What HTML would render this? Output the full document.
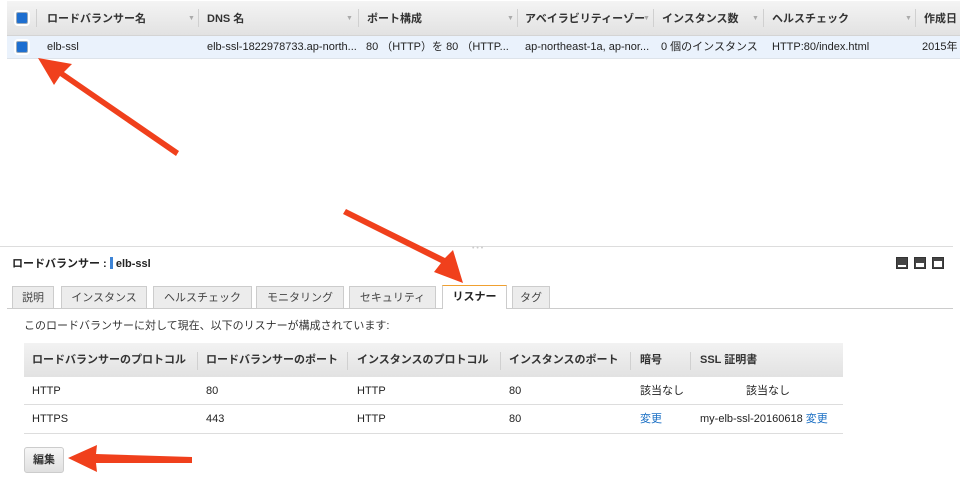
<!DOCTYPE html>
<html><head><meta charset="utf-8"><style>
body{margin:0;width:960px;height:493px;background:#fff;font-family:"Liberation Sans","Noto Sans CJK JP",sans-serif;font-size:11px;color:#222;position:relative;overflow:hidden}
.a{position:absolute;white-space:nowrap;line-height:14px}
.hdr{position:absolute;left:7px;top:1px;width:953px;height:34px;background:linear-gradient(#f4f4f4,#e2e2e2);border-bottom:1px solid #d4d4d4}
.row{position:absolute;left:7px;top:36px;width:953px;height:22px;background:#eaf2fc;border-bottom:1px solid #dde3ea}
.cb{position:absolute;width:10px;height:10px;background:#1e6fd0;border:1px solid #9ab;border-radius:2px;box-shadow:0 0 0 2px #fff}
.th{font-weight:bold;color:#333}
.sep{position:absolute;top:9px;width:1px;height:18px;background:#d0d0d0}
.dd{position:absolute;top:15px;font-size:7px;color:#aaa}
.tab{position:absolute;top:286px;height:22px;box-sizing:border-box;background:#ececec;border:1px solid #ccc;border-bottom:none;font-size:11px;color:#444;text-align:center;line-height:22px}
.lt{position:absolute;left:24px;top:343px;width:819px;height:34px;background:linear-gradient(#f2f2f2,#e2e2e2)}
.ln{position:absolute;left:24px;width:819px;height:1px;background:#ddd}
.ic{position:absolute;top:257px;width:10px;height:10px;border:1px solid #333;background:#444}
</style></head><body>
<div class="hdr"></div>
<div class="cb" style="left:16px;top:12px"></div>
<div class="sep" style="left:36px"></div>
<div class="a th" style="left:47px;top:12px">ロードバランサー名</div><div class="dd" style="left:188px">▼</div>
<div class="sep" style="left:198px"></div>
<div class="a th" style="left:207px;top:12px">DNS 名</div><div class="dd" style="left:346px">▼</div>
<div class="sep" style="left:358px"></div>
<div class="a th" style="left:367px;top:12px">ポート構成</div><div class="dd" style="left:507px">▼</div>
<div class="sep" style="left:517px"></div>
<div class="a th" style="left:525px;top:12px">アベイラビリティーゾー</div><div class="dd" style="left:643px">▼</div>
<div class="sep" style="left:653px"></div>
<div class="a th" style="left:662px;top:12px">インスタンス数</div><div class="dd" style="left:752px">▼</div>
<div class="sep" style="left:763px"></div>
<div class="a th" style="left:772px;top:12px">ヘルスチェック</div><div class="dd" style="left:905px">▼</div>
<div class="sep" style="left:915px"></div>
<div class="a th" style="left:924px;top:12px">作成日</div>
<div class="row"></div>
<div class="cb" style="left:16px;top:41px"></div>
<div class="a" style="left:47px;top:40px">elb-ssl</div>
<div class="a" style="left:207px;top:40px">elb-ssl-1822978733.ap-north...</div>
<div class="a" style="left:366px;top:40px">80 （HTTP）を 80 （HTTP...</div>
<div class="a" style="left:525px;top:40px">ap-northeast-1a, ap-nor...</div>
<div class="a" style="left:661px;top:40px">0 個のインスタンス</div>
<div class="a" style="left:772px;top:40px">HTTP:80/index.html</div>
<div class="a" style="left:922px;top:40px">2015年</div>
<div style="position:absolute;left:0;top:246px;width:953px;height:1px;background:#ddd"></div>
<div class="a" style="left:472px;top:242px;font-size:7px;color:#ccc">• • •</div>
<div class="a th" style="left:12px;top:257px;color:#222">ロードバランサー : <span style="display:inline-block;width:3px;height:12px;background:#3d84d6;vertical-align:-2px"></span> elb-ssl</div>
<div class="ic" style="left:896px"><div style="position:absolute;left:1px;bottom:1px;width:8px;height:2px;background:#fff"></div></div>
<div class="ic" style="left:914px"><div style="position:absolute;left:1px;bottom:1px;width:8px;height:4px;background:#fff"></div></div>
<div class="ic" style="left:932px"><div style="position:absolute;left:1px;bottom:1px;width:8px;height:6px;background:#fff"></div></div>
<div style="position:absolute;left:7px;top:308px;width:946px;height:1px;background:#ccc"></div>
<div class="tab" style="left:12px;width:42px">説明</div>
<div class="tab" style="left:61px;width:86px">インスタンス</div>
<div class="tab" style="left:153px;width:99px">ヘルスチェック</div>
<div class="tab" style="left:256px;width:88px">モニタリング</div>
<div class="tab" style="left:349px;width:87px">セキュリティ</div>
<div class="tab" style="left:442px;width:65px;top:285px;height:24px;background:#fff;border-top:1px solid #f0a030;font-weight:bold;color:#222">リスナー</div>
<div class="tab" style="left:512px;width:38px">タグ</div>
<div class="a" style="left:24px;top:319px;color:#333">このロードバランサーに対して現在、以下のリスナーが構成されています:</div>
<div class="lt"></div>
<div class="a th" style="left:32px;top:353px">ロードバランサーのプロトコル</div>
<div class="sep" style="left:197px;top:352px"></div>
<div class="a th" style="left:206px;top:353px">ロードバランサーのポート</div>
<div class="sep" style="left:347px;top:352px"></div>
<div class="a th" style="left:357px;top:353px">インスタンスのプロトコル</div>
<div class="sep" style="left:500px;top:352px"></div>
<div class="a th" style="left:509px;top:353px">インスタンスのポート</div>
<div class="sep" style="left:630px;top:352px"></div>
<div class="a th" style="left:640px;top:353px">暗号</div>
<div class="sep" style="left:690px;top:352px"></div>
<div class="a th" style="left:700px;top:353px">SSL 証明書</div>
<div class="a" style="left:32px;top:384px">HTTP</div><div class="a" style="left:206px;top:384px">80</div><div class="a" style="left:357px;top:384px">HTTP</div><div class="a" style="left:509px;top:384px">80</div><div class="a" style="left:640px;top:384px">該当なし</div><div class="a" style="left:746px;top:384px">該当なし</div>
<div class="ln" style="top:404px"></div>
<div class="a" style="left:32px;top:412px">HTTPS</div><div class="a" style="left:206px;top:412px">443</div><div class="a" style="left:357px;top:412px">HTTP</div><div class="a" style="left:509px;top:412px">80</div><div class="a" style="left:640px;top:412px;color:#1a6fc4">変更</div><div class="a" style="left:700px;top:412px">my-elb-ssl-20160618 <span style="color:#1a6fc4">変更</span></div>
<div class="ln" style="top:433px"></div>
<div class="a th" style="left:24px;top:447px;width:38px;height:24px;line-height:24px;text-align:center;background:linear-gradient(#f6f6f6,#e0e0e0);border:1px solid #ccc;border-radius:3px">編集</div>
<svg style="position:absolute;left:0;top:0" width="960" height="493">
<g fill="#f0401c">
<polygon points="38,58 72,64 64,72 179,151 176,156 60,76 54,85"/>
<polygon points="463,283 453,250 445,258 346,209 343,214 441,263 434,272"/>
<polygon points="68,458 97,445 96,454 192,457 192,463 96,463 97,472"/>
</g>
</svg>
</body></html>
